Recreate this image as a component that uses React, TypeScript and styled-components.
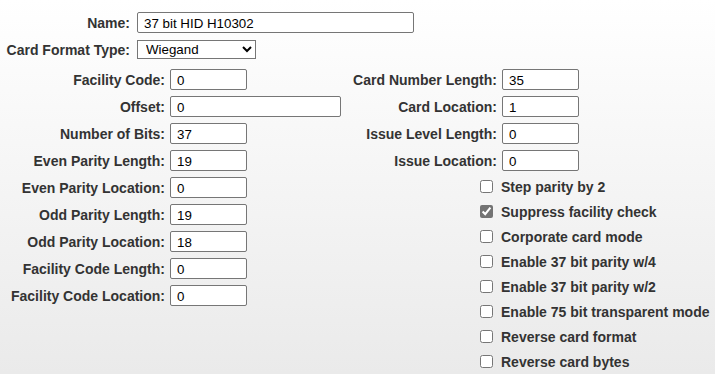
import React from "react";
import styled, { createGlobalStyle } from "styled-components";

const Global = createGlobalStyle`
  html, body { margin: 0; padding: 0; }
  body {
    min-height: 100vh;
    background: linear-gradient(#ffffff, #eaeaea);
    font-family: "Liberation Sans", Arial, sans-serif;
  }
`;

const Page = styled.div`
  padding: 12px 0 0 8px;
  width: 707px;
  box-sizing: border-box;
`;

const TopGrid = styled.div`
  display: grid;
  grid-template-columns: 122px auto;
  column-gap: 7px;
  row-gap: 7px;
  align-items: center;
  justify-items: start;
`;

const Label = styled.label`
  justify-self: end;
  font-size: 14px;
  line-height: 16px;
  font-weight: bold;
  color: #333;
  white-space: nowrap;
`;

const TextInput = styled.input<{ $w: number }>`
  box-sizing: border-box;
  width: ${(p) => p.$w}px;
  height: 21px;
  margin: 0;
  padding: 1px 5px 0 6px;
  border: 1px solid #767676;
  border-radius: 2px;
  background: #fff;
  font-family: "Liberation Sans", Arial, sans-serif;
  font-size: 13.33px;
  color: #000;
`;

const Select = styled.select`
  box-sizing: border-box;
  width: 119px;
  height: 19px;
  margin: 0;
  padding: 0 0 0 4px;
  border: 1px solid #767676;
  border-radius: 0;
  background: #fff;
  font-family: "Liberation Sans", Arial, sans-serif;
  font-size: 13.33px;
  color: #000;
`;

const Columns = styled.div`
  display: flex;
  gap: 10px;
  margin-top: 10px;
  align-items: flex-start;
`;

const FieldGrid = styled.div<{ $labelW: number }>`
  display: grid;
  grid-template-columns: ${(p) => p.$labelW}px auto;
  grid-auto-rows: 21px;
  column-gap: 5px;
  row-gap: 6px;
  align-items: center;
  justify-items: start;
`;

const RightCol = styled.div`
  display: flex;
  flex-direction: column;
`;

const CheckList = styled.div`
  margin-top: 3px;
  padding-left: 129px;
  display: flex;
  flex-direction: column;
`;

const CheckRow = styled.label`
  height: 25px;
  display: flex;
  align-items: center;
  gap: 8px;
  font-size: 14px;
  line-height: 16px;
  font-weight: bold;
  color: #333;
  white-space: nowrap;
`;

const Check = styled.input`
  flex: none;
  width: 13px;
  height: 13px;
  margin: 0;
  accent-color: #737373;
`;

const leftFields: [string, string, number][] = [
  ["Facility Code:", "0", 77],
  ["Offset:", "0", 171],
  ["Number of Bits:", "37", 77],
  ["Even Parity Length:", "19", 77],
  ["Even Parity Location:", "0", 77],
  ["Odd Parity Length:", "19", 77],
  ["Odd Parity Location:", "18", 77],
  ["Facility Code Length:", "0", 77],
  ["Facility Code Location:", "0", 77],
];

const rightFields: [string, string][] = [
  ["Card Number Length:", "35"],
  ["Card Location:", "1"],
  ["Issue Level Length:", "0"],
  ["Issue Location:", "0"],
];

const checks: [string, boolean][] = [
  ["Step parity by 2", false],
  ["Suppress facility check", true],
  ["Corporate card mode", false],
  ["Enable 37 bit parity w/4", false],
  ["Enable 37 bit parity w/2", false],
  ["Enable 75 bit transparent mode", false],
  ["Reverse card format", false],
  ["Reverse card bytes", false],
];

export default function App() {
  return (
    <>
      <Global />
      <Page>
        <TopGrid>
          <Label>Name:</Label>
          <TextInput $w={277} defaultValue="37 bit HID H10302" />
          <Label>Card Format Type:</Label>
          <Select defaultValue="Wiegand">
            <option>Wiegand</option>
            <option>Magnetic</option>
          </Select>
        </TopGrid>
        <Columns>
          <FieldGrid $labelW={157}>
            {leftFields.map(([l, v, w]) => (
              <React.Fragment key={l}>
                <Label>{l}</Label>
                <TextInput $w={w} defaultValue={v} />
              </React.Fragment>
            ))}
          </FieldGrid>
          <RightCol>
            <FieldGrid $labelW={146}>
              {rightFields.map(([l, v]) => (
                <React.Fragment key={l}>
                  <Label>{l}</Label>
                  <TextInput $w={77} defaultValue={v} />
                </React.Fragment>
              ))}
            </FieldGrid>
            <CheckList>
              {checks.map(([l, c]) => (
                <CheckRow key={l}>
                  <Check type="checkbox" defaultChecked={c} />
                  {l}
                </CheckRow>
              ))}
            </CheckList>
          </RightCol>
        </Columns>
      </Page>
    </>
  );
}
